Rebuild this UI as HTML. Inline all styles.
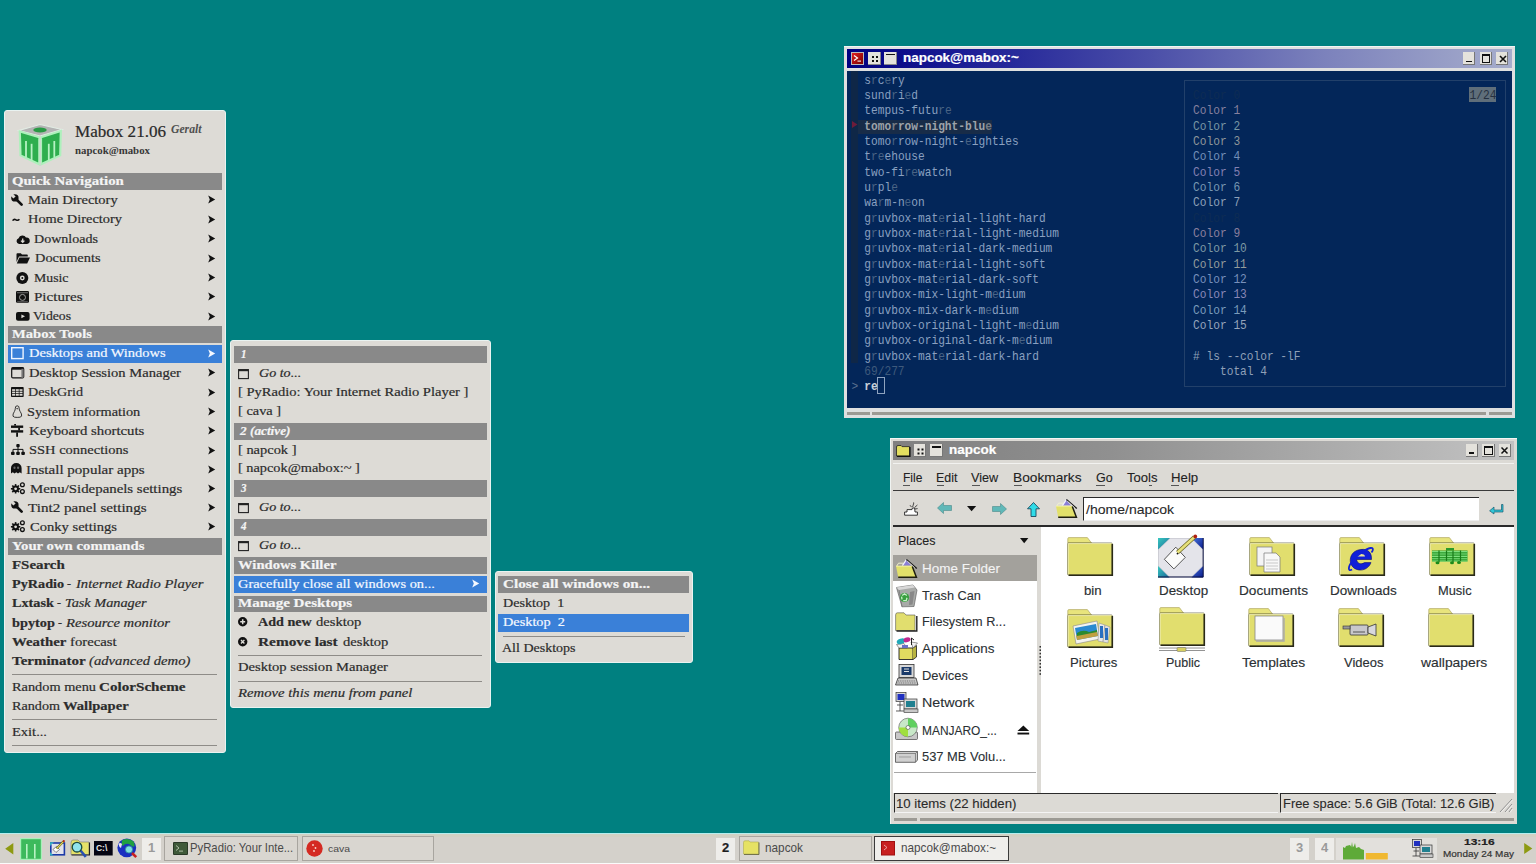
<!DOCTYPE html><html><head><meta charset="utf-8"><style>
html,body{margin:0;padding:0}
body{width:1536px;height:864px;overflow:hidden;position:relative;background:#008080;font-family:"Liberation Serif",serif}
.t{position:absolute;white-space:pre;transform-origin:0 0;-webkit-text-stroke:0.2px currentColor}
.r{position:absolute;box-sizing:border-box}
svg.r{overflow:visible}
.tm{position:absolute;white-space:pre;font-family:"Liberation Mono",monospace;font-size:11.200px;line-height:11.200px}
</style></head><body>
<div class="r" style="left:4px;top:110px;width:222px;height:643px;background:#dddbd6;border:1px solid #e9f3f1;border-radius:3px"></div>
<svg class="r" style="left:14px;top:120px" width="54" height="52" viewBox="14 120 54 52">
<polygon points="40,124.5 62,129.5 40,136 18.8,130.5" fill="#b4b4b4" stroke="#e2ece4" stroke-width="1.2"/>
<ellipse cx="40" cy="130" rx="6.7" ry="2.6" fill="#2a9a45"/>
<polygon points="19.8,131.5 39.3,137.2 39.3,164.2 20.5,155.4" fill="#2eae4e" stroke="#aef0bc" stroke-width="2.2"/>
<polygon points="60.8,131 41,137.2 41,164.2 60.2,155.4" fill="#2eae4e" stroke="#aef0bc" stroke-width="2.2"/>
<path d="M40.2 136 V166" stroke="#c8dccc" stroke-width="1.6"/>
<line x1="26" y1="141" x2="26" y2="157.5" stroke="#b5f2c2" stroke-width="1.8"/>
<line x1="31.6" y1="143.8" x2="31.6" y2="160.5" stroke="#b5f2c2" stroke-width="1.8"/>
<line x1="48.8" y1="143.8" x2="48.8" y2="160.5" stroke="#b5f2c2" stroke-width="1.8"/>
<line x1="54.3" y1="141" x2="54.3" y2="157.5" stroke="#b5f2c2" stroke-width="1.8"/>
</svg>
<div class="t" style="left:75.00px;top:124.35px;font-size:15.85px;line-height:15.85px;color:#2a2a2a;transform:scaleX(1.0768);">Mabox 21.06</div>
<div class="t" style="left:170.80px;top:122.84px;font-size:12.00px;line-height:12.00px;font-weight:700;font-style:italic;color:#505050;transform:scaleX(0.9735);-webkit-text-stroke:0;">Geralt</div>
<div class="t" style="left:75.00px;top:145.25px;font-size:11.38px;line-height:11.38px;font-weight:700;color:#383838;transform:scaleX(0.9504);-webkit-text-stroke:0;">napcok@mabox</div>
<div class="r" style="left:8px;top:173px;width:214px;height:17px;background:#898989;"></div>
<div class="t" style="left:12.00px;top:175.37px;font-size:12.92px;line-height:12.92px;font-weight:700;color:#f4f4f4;transform:scaleX(1.1511);">Quick Navigation</div>
<div class="r" style="left:8px;top:326px;width:214px;height:17px;background:#898989;"></div>
<div class="t" style="left:12.00px;top:328.37px;font-size:12.92px;line-height:12.92px;font-weight:700;color:#f4f4f4;transform:scaleX(1.1309);">Mabox Tools</div>
<div class="r" style="left:8px;top:538px;width:214px;height:17px;background:#898989;"></div>
<div class="t" style="left:12.00px;top:540.37px;font-size:12.92px;line-height:12.92px;font-weight:700;color:#f4f4f4;transform:scaleX(1.1431);">Your own commands</div>
<div class="t" style="left:27.80px;top:193.70px;font-size:12.77px;line-height:12.77px;color:#2c2c2c;transform:scaleX(1.1344);">Main Directory</div>
<svg class="r" style="left:207.8px;top:195.0px" width="8" height="9" viewBox="0 0 8 9"><path d="M0.2 0.4 L7.2 4.5 L0.2 8.6 L1.8 4.5 Z" fill="#111"/></svg>
<div class="t" style="left:27.80px;top:213.30px;font-size:12.77px;line-height:12.77px;color:#2c2c2c;transform:scaleX(1.1281);">Home Directory</div>
<svg class="r" style="left:207.8px;top:214.6px" width="8" height="9" viewBox="0 0 8 9"><path d="M0.2 0.4 L7.2 4.5 L0.2 8.6 L1.8 4.5 Z" fill="#111"/></svg>
<div class="t" style="left:33.90px;top:232.70px;font-size:12.77px;line-height:12.77px;color:#2c2c2c;transform:scaleX(1.1003);">Downloads</div>
<svg class="r" style="left:207.8px;top:234.0px" width="8" height="9" viewBox="0 0 8 9"><path d="M0.2 0.4 L7.2 4.5 L0.2 8.6 L1.8 4.5 Z" fill="#111"/></svg>
<div class="t" style="left:35.00px;top:252.20px;font-size:12.77px;line-height:12.77px;color:#2c2c2c;transform:scaleX(1.1262);">Documents</div>
<svg class="r" style="left:207.8px;top:253.5px" width="8" height="9" viewBox="0 0 8 9"><path d="M0.2 0.4 L7.2 4.5 L0.2 8.6 L1.8 4.5 Z" fill="#111"/></svg>
<div class="t" style="left:33.90px;top:271.60px;font-size:12.77px;line-height:12.77px;color:#2c2c2c;transform:scaleX(1.0808);">Music</div>
<svg class="r" style="left:207.8px;top:272.9px" width="8" height="9" viewBox="0 0 8 9"><path d="M0.2 0.4 L7.2 4.5 L0.2 8.6 L1.8 4.5 Z" fill="#111"/></svg>
<div class="t" style="left:33.90px;top:291.00px;font-size:12.77px;line-height:12.77px;color:#2c2c2c;transform:scaleX(1.1790);">Pictures</div>
<svg class="r" style="left:207.8px;top:292.3px" width="8" height="9" viewBox="0 0 8 9"><path d="M0.2 0.4 L7.2 4.5 L0.2 8.6 L1.8 4.5 Z" fill="#111"/></svg>
<div class="t" style="left:33.30px;top:310.40px;font-size:12.77px;line-height:12.77px;color:#2c2c2c;transform:scaleX(1.0732);">Videos</div>
<svg class="r" style="left:207.8px;top:311.7px" width="8" height="9" viewBox="0 0 8 9"><path d="M0.2 0.4 L7.2 4.5 L0.2 8.6 L1.8 4.5 Z" fill="#111"/></svg>
<div class="r" style="left:8px;top:345px;width:214px;height:18px;background:#3a80d8;"></div>
<div class="t" style="left:28.60px;top:347.40px;font-size:12.77px;line-height:12.77px;color:#f4f8ff;transform:scaleX(1.1339);">Desktops and Windows</div>
<svg class="r" style="left:207.8px;top:348.7px" width="8" height="9" viewBox="0 0 8 9"><path d="M0.2 0.4 L7.2 4.5 L0.2 8.6 L1.8 4.5 Z" fill="#f4f8ff"/></svg>
<div class="t" style="left:29.00px;top:366.90px;font-size:12.77px;line-height:12.77px;color:#2c2c2c;transform:scaleX(1.1399);">Desktop Session Manager</div>
<svg class="r" style="left:207.8px;top:368.2px" width="8" height="9" viewBox="0 0 8 9"><path d="M0.2 0.4 L7.2 4.5 L0.2 8.6 L1.8 4.5 Z" fill="#111"/></svg>
<div class="t" style="left:27.80px;top:386.20px;font-size:12.77px;line-height:12.77px;color:#2c2c2c;transform:scaleX(1.1078);">DeskGrid</div>
<svg class="r" style="left:207.8px;top:387.5px" width="8" height="9" viewBox="0 0 8 9"><path d="M0.2 0.4 L7.2 4.5 L0.2 8.6 L1.8 4.5 Z" fill="#111"/></svg>
<div class="t" style="left:27.00px;top:405.60px;font-size:12.77px;line-height:12.77px;color:#2c2c2c;transform:scaleX(1.1209);">System information</div>
<svg class="r" style="left:207.8px;top:406.9px" width="8" height="9" viewBox="0 0 8 9"><path d="M0.2 0.4 L7.2 4.5 L0.2 8.6 L1.8 4.5 Z" fill="#111"/></svg>
<div class="t" style="left:29.00px;top:424.90px;font-size:12.77px;line-height:12.77px;color:#2c2c2c;transform:scaleX(1.1581);">Keyboard shortcuts</div>
<svg class="r" style="left:207.8px;top:426.2px" width="8" height="9" viewBox="0 0 8 9"><path d="M0.2 0.4 L7.2 4.5 L0.2 8.6 L1.8 4.5 Z" fill="#111"/></svg>
<div class="t" style="left:29.00px;top:444.20px;font-size:12.77px;line-height:12.77px;color:#2c2c2c;transform:scaleX(1.1335);">SSH connections</div>
<svg class="r" style="left:207.8px;top:445.5px" width="8" height="9" viewBox="0 0 8 9"><path d="M0.2 0.4 L7.2 4.5 L0.2 8.6 L1.8 4.5 Z" fill="#111"/></svg>
<div class="t" style="left:25.80px;top:463.60px;font-size:12.77px;line-height:12.77px;color:#2c2c2c;transform:scaleX(1.1776);">Install popular apps</div>
<svg class="r" style="left:207.8px;top:464.9px" width="8" height="9" viewBox="0 0 8 9"><path d="M0.2 0.4 L7.2 4.5 L0.2 8.6 L1.8 4.5 Z" fill="#111"/></svg>
<div class="t" style="left:29.70px;top:482.90px;font-size:12.77px;line-height:12.77px;color:#2c2c2c;transform:scaleX(1.1638);">Menu/Sidepanels settings</div>
<svg class="r" style="left:207.8px;top:484.2px" width="8" height="9" viewBox="0 0 8 9"><path d="M0.2 0.4 L7.2 4.5 L0.2 8.6 L1.8 4.5 Z" fill="#111"/></svg>
<div class="t" style="left:27.80px;top:501.70px;font-size:12.77px;line-height:12.77px;color:#2c2c2c;transform:scaleX(1.1828);">Tint2 panel settings</div>
<svg class="r" style="left:207.8px;top:502.99999999999994px" width="8" height="9" viewBox="0 0 8 9"><path d="M0.2 0.4 L7.2 4.5 L0.2 8.6 L1.8 4.5 Z" fill="#111"/></svg>
<div class="t" style="left:29.70px;top:520.60px;font-size:12.77px;line-height:12.77px;color:#2c2c2c;transform:scaleX(1.1408);">Conky settings</div>
<svg class="r" style="left:207.8px;top:521.9000000000001px" width="8" height="9" viewBox="0 0 8 9"><path d="M0.2 0.4 L7.2 4.5 L0.2 8.6 L1.8 4.5 Z" fill="#111"/></svg>
<div class="t" style="left:11.70px;top:558.60px;font-size:12.77px;line-height:12.77px;font-weight:700;color:#2c2c2c;transform:scaleX(1.1670);">FSearch</div>
<div class="t" style="left:11.70px;top:578.00px;font-size:12.77px;line-height:12.77px;font-weight:700;color:#2c2c2c;transform:scaleX(1.1148);">PyRadio</div>
<div class="t" style="left:67.00px;top:578.00px;font-size:12.77px;line-height:12.77px;color:#2c2c2c;transform:scaleX(0.9406);">-</div>
<div class="t" style="left:75.60px;top:578.00px;font-size:12.77px;line-height:12.77px;font-style:italic;color:#2c2c2c;transform:scaleX(1.1442);">Internet Radio Player</div>
<div class="t" style="left:11.70px;top:597.40px;font-size:12.77px;line-height:12.77px;font-weight:700;color:#2c2c2c;transform:scaleX(1.1141);">Lxtask</div>
<div class="t" style="left:57.00px;top:597.40px;font-size:12.77px;line-height:12.77px;color:#2c2c2c;transform:scaleX(0.9406);">-</div>
<div class="t" style="left:65.30px;top:597.40px;font-size:12.77px;line-height:12.77px;font-style:italic;color:#2c2c2c;transform:scaleX(1.1199);">Task Manager</div>
<div class="t" style="left:11.70px;top:616.70px;font-size:12.77px;line-height:12.77px;font-weight:700;color:#2c2c2c;transform:scaleX(1.1219);">bpytop</div>
<div class="t" style="left:58.00px;top:616.70px;font-size:12.77px;line-height:12.77px;color:#2c2c2c;transform:scaleX(0.9406);">-</div>
<div class="t" style="left:66.00px;top:616.70px;font-size:12.77px;line-height:12.77px;font-style:italic;color:#2c2c2c;transform:scaleX(1.1470);">Resource monitor</div>
<div class="t" style="left:11.70px;top:635.80px;font-size:12.77px;line-height:12.77px;font-weight:700;color:#2c2c2c;transform:scaleX(1.1601);">Weather</div>
<div class="t" style="left:70.00px;top:635.80px;font-size:12.77px;line-height:12.77px;color:#2c2c2c;transform:scaleX(1.1557);">forecast</div>
<div class="t" style="left:11.70px;top:655.00px;font-size:12.77px;line-height:12.77px;font-weight:700;color:#2c2c2c;transform:scaleX(1.1747);">Terminator</div>
<div class="t" style="left:89.40px;top:655.00px;font-size:12.77px;line-height:12.77px;font-style:italic;color:#2c2c2c;transform:scaleX(1.1486);">(advanced demo)</div>
<div class="r" style="left:12px;top:674px;width:205px;height:1px;background:#8e8c88;"></div>
<div class="t" style="left:11.70px;top:680.60px;font-size:12.77px;line-height:12.77px;color:#2c2c2c;transform:scaleX(1.1225);">Random menu</div>
<div class="t" style="left:99.40px;top:680.60px;font-size:12.77px;line-height:12.77px;font-weight:700;color:#2c2c2c;transform:scaleX(1.1855);">ColorScheme</div>
<div class="t" style="left:11.70px;top:700.00px;font-size:12.77px;line-height:12.77px;color:#2c2c2c;transform:scaleX(1.1093);">Random</div>
<div class="t" style="left:63.30px;top:700.00px;font-size:12.77px;line-height:12.77px;font-weight:700;color:#2c2c2c;transform:scaleX(1.1433);">Wallpaper</div>
<div class="r" style="left:12px;top:719px;width:205px;height:1px;background:#8e8c88;"></div>
<div class="t" style="left:11.70px;top:725.80px;font-size:12.77px;line-height:12.77px;color:#2c2c2c;transform:scaleX(1.1343);">Exit...</div>
<div class="r" style="left:12px;top:745px;width:205px;height:1px;background:#8e8c88;"></div>
<svg class="r" style="left:11.3px;top:194.2px" width="12.5" height="12" viewBox="0 0 12.5 12"><circle cx="3.9" cy="3.9" r="3.7" fill="#111"/>
<path d="M4.2 4.2 L10.6 10.6" stroke="#111" stroke-width="2.7" stroke-linecap="round"/>
<path d="M-0.6 1.6 L1.6 -0.6 L4.6 2.4 L2.4 4.6 Z" fill="#dddbd6"/></svg>
<svg class="r" style="left:11.7px;top:217.8px" width="8" height="4" viewBox="0 0 8 4"><path d="M0.6 2.6 Q2 0.6 4 1.8 Q6 3 7.4 1.2" fill="none" stroke="#111" stroke-width="1.5"/></svg>
<svg class="r" style="left:16.4px;top:234.6px" width="13.5" height="9.5" viewBox="0 0 13.5 9.5"><path d="M3 9 A3 3 0 0 1 2.6 3.2 A4 4 0 0 1 10 2.6 A3.2 3.2 0 0 1 11 9 Z" fill="#111"/>
<path d="M6.7 3.4 V7.2 M5 5.6 L6.7 7.4 L8.4 5.6" stroke="#dddbd6" stroke-width="1.3" fill="none"/></svg>
<svg class="r" style="left:16px;top:252.8px" width="14" height="11" viewBox="0 0 14 11"><path d="M0.5 1.2 Q0.5 0.3 1.4 0.3 H4.8 L6 1.6 H11 Q11.8 1.6 11.8 2.4 V3.6 H3 L0.5 9 Z" fill="#111"/>
<path d="M3.4 4.6 H14 L11.2 10.6 H0.8 Z" fill="#111"/></svg>
<svg class="r" style="left:16.4px;top:271.6px" width="12.6" height="12" viewBox="0 0 12.6 12"><circle cx="6.3" cy="6" r="6" fill="#111"/><circle cx="6.3" cy="6" r="2.4" fill="#dddbd6"/><circle cx="6.3" cy="6" r="1" fill="#111"/></svg>
<svg class="r" style="left:16.4px;top:291px" width="13" height="11.7" viewBox="0 0 13 11.7"><rect x="0" y="0" width="13" height="11.7" rx="1.2" fill="#111"/>
<rect x="1" y="1.4" width="11" height="0.8" fill="#888"/>
<circle cx="6.5" cy="6.4" r="3" fill="none" stroke="#aaa" stroke-width="0.9"/>
<rect x="1.2" y="10" width="10.6" height="0.6" fill="#777"/></svg>
<svg class="r" style="left:16.4px;top:312px" width="13.6" height="8.7" viewBox="0 0 13.6 8.7"><rect x="0" y="0" width="13.6" height="8.7" rx="2" fill="#111"/><path d="M5.4 2.5 L9 4.35 L5.4 6.2 Z" fill="#dddbd6"/></svg>
<svg class="r" style="left:11.3px;top:347.3px" width="12.8" height="12.3" viewBox="0 0 12.8 12.3"><rect x="0.7" y="0.7" width="11.4" height="10.9" fill="none" stroke="#eef4ff" stroke-width="1.4"/></svg>
<svg class="r" style="left:11.3px;top:366.8px" width="13.4" height="11.6" viewBox="0 0 13.4 11.6"><rect x="0.7" y="0.7" width="12.0" height="10.2" rx="1.2" fill="none" stroke="#111" stroke-width="1.2"/>
<rect x="0.7" y="0.7" width="12.0" height="2" fill="#111"/>
<rect x="10.4" y="1.8" width="2.2" height="9.0" fill="#777"/></svg>
<svg class="r" style="left:11.3px;top:386.8px" width="12.7" height="10" viewBox="0 0 12.7 10"><rect x="0" y="0" width="12.7" height="10" rx="0.8" fill="#111"/><rect x="1.1" y="2.2" width="3.0" height="1.7" fill="#dddbd6"/><rect x="4.8" y="2.2" width="3.0" height="1.7" fill="#dddbd6"/><rect x="8.5" y="2.2" width="3.0" height="1.7" fill="#dddbd6"/><rect x="1.1" y="4.6" width="3.0" height="1.7" fill="#dddbd6"/><rect x="4.8" y="4.6" width="3.0" height="1.7" fill="#dddbd6"/><rect x="8.5" y="4.6" width="3.0" height="1.7" fill="#dddbd6"/><rect x="1.1" y="7.0" width="3.0" height="1.7" fill="#dddbd6"/><rect x="4.8" y="7.0" width="3.0" height="1.7" fill="#dddbd6"/><rect x="8.5" y="7.0" width="3.0" height="1.7" fill="#dddbd6"/></svg>
<svg class="r" style="left:11.9px;top:404.6px" width="10.6" height="13" viewBox="0 0 10.6 13"><path d="M5.2 0.8 Q3.2 0.8 3.3 3.4 Q3.3 5 2.4 6.5 Q0.6 9 1 11.2 Q2 12.6 5.2 12.4 Q8.6 12.6 9.6 11.2 Q10 9 8.2 6.5 Q7.2 5 7.2 3.4 Q7.2 0.8 5.2 0.8 Z" fill="none" stroke="#222" stroke-width="0.9"/>
<path d="M4 3.2 L6.4 3.2 L5.2 4.6 Z" fill="#222"/></svg>
<svg class="r" style="left:11.3px;top:424px" width="12.2" height="12.8" viewBox="0 0 12.2 12.8"><rect x="0" y="1.5" width="12.2" height="2.4" fill="#111"/><rect x="0" y="6.2" width="12.2" height="2.4" fill="#111"/><rect x="3.2" y="0" width="1.8" height="1.6" fill="#111"/><rect x="7.2" y="3.8" width="1.8" height="2.6" fill="#111"/><rect x="5.2" y="8.4" width="1.8" height="4.4" fill="#111"/></svg>
<svg class="r" style="left:11.3px;top:443.9px" width="14" height="11.2" viewBox="0 0 14 11.2"><rect x="5.3" y="0" width="3.4" height="3.2" rx="1" fill="#111"/>
<path d="M7 3 V5.4 M2 8 V5.4 H12 V8 M7 5.4 V8" stroke="#111" stroke-width="1" fill="none"/>
<rect x="0" y="7.8" width="3.6" height="3.3" rx="1" fill="#111"/><rect x="5.2" y="7.8" width="3.6" height="3.3" rx="1" fill="#111"/><rect x="10.3" y="7.8" width="3.6" height="3.3" rx="1" fill="#111"/></svg>
<svg class="r" style="left:11.3px;top:462.8px" width="10.6" height="10.5" viewBox="0 0 10.6 10.5"><path d="M0 10.5 V5 A5.3 5 0 0 1 10.6 5 V10.5 L8.8 9.2 L7 10.5 L5.3 9.2 L3.6 10.5 L1.8 9.2 Z" fill="#111"/>
<ellipse cx="3.5" cy="4.8" rx="1.1" ry="1.3" fill="#666"/><ellipse cx="7.1" cy="4.8" rx="1.1" ry="1.3" fill="#666"/></svg>
<svg class="r" style="left:11.3px;top:482px" width="14" height="12.4" viewBox="0 0 14 12.4"><circle cx="4.6" cy="6.8" r="3.4" fill="#111"/><rect x="3.8" y="2.0999999999999996" width="1.6" height="2.3" fill="#111" transform="rotate(0.0 4.6 6.8)"/><rect x="3.8" y="2.0999999999999996" width="1.6" height="2.3" fill="#111" transform="rotate(45.0 4.6 6.8)"/><rect x="3.8" y="2.0999999999999996" width="1.6" height="2.3" fill="#111" transform="rotate(90.0 4.6 6.8)"/><rect x="3.8" y="2.0999999999999996" width="1.6" height="2.3" fill="#111" transform="rotate(135.0 4.6 6.8)"/><rect x="3.8" y="2.0999999999999996" width="1.6" height="2.3" fill="#111" transform="rotate(180.0 4.6 6.8)"/><rect x="3.8" y="2.0999999999999996" width="1.6" height="2.3" fill="#111" transform="rotate(225.0 4.6 6.8)"/><rect x="3.8" y="2.0999999999999996" width="1.6" height="2.3" fill="#111" transform="rotate(270.0 4.6 6.8)"/><rect x="3.8" y="2.0999999999999996" width="1.6" height="2.3" fill="#111" transform="rotate(315.0 4.6 6.8)"/><circle cx="4.6" cy="6.8" r="1.4" fill="#dddbd6"/><circle cx="11.4" cy="2.7" r="1.9" fill="none" stroke="#111" stroke-width="1.3"/><circle cx="11.4" cy="9.6" r="1.9" fill="none" stroke="#111" stroke-width="1.3"/></svg>
<svg class="r" style="left:11.3px;top:501px" width="12.5" height="12" viewBox="0 0 12.5 12"><circle cx="3.9" cy="3.9" r="3.7" fill="#111"/>
<path d="M4.2 4.2 L10.6 10.6" stroke="#111" stroke-width="2.7" stroke-linecap="round"/>
<path d="M-0.6 1.6 L1.6 -0.6 L4.6 2.4 L2.4 4.6 Z" fill="#dddbd6"/></svg>
<svg class="r" style="left:11.3px;top:520.2px" width="14" height="12.4" viewBox="0 0 14 12.4"><circle cx="4.6" cy="6.8" r="3.4" fill="#111"/><rect x="3.8" y="2.0999999999999996" width="1.6" height="2.3" fill="#111" transform="rotate(0.0 4.6 6.8)"/><rect x="3.8" y="2.0999999999999996" width="1.6" height="2.3" fill="#111" transform="rotate(45.0 4.6 6.8)"/><rect x="3.8" y="2.0999999999999996" width="1.6" height="2.3" fill="#111" transform="rotate(90.0 4.6 6.8)"/><rect x="3.8" y="2.0999999999999996" width="1.6" height="2.3" fill="#111" transform="rotate(135.0 4.6 6.8)"/><rect x="3.8" y="2.0999999999999996" width="1.6" height="2.3" fill="#111" transform="rotate(180.0 4.6 6.8)"/><rect x="3.8" y="2.0999999999999996" width="1.6" height="2.3" fill="#111" transform="rotate(225.0 4.6 6.8)"/><rect x="3.8" y="2.0999999999999996" width="1.6" height="2.3" fill="#111" transform="rotate(270.0 4.6 6.8)"/><rect x="3.8" y="2.0999999999999996" width="1.6" height="2.3" fill="#111" transform="rotate(315.0 4.6 6.8)"/><circle cx="4.6" cy="6.8" r="1.4" fill="#dddbd6"/><circle cx="11.4" cy="2.7" r="1.9" fill="none" stroke="#111" stroke-width="1.3"/><circle cx="11.4" cy="9.6" r="1.9" fill="none" stroke="#111" stroke-width="1.3"/></svg>
<div class="r" style="left:230px;top:340px;width:261px;height:368px;background:#dddbd6;border:1px solid #e9f3f1;border-radius:3px"></div>
<div class="r" style="left:233.5px;top:346px;width:253.5px;height:17px;background:#898989;"></div>
<div class="t" style="left:240.60px;top:347.87px;font-size:12.92px;line-height:12.92px;font-weight:700;font-style:italic;color:#f4f4f4;transform:scaleX(0.8512);">1</div>
<svg class="r" style="left:237.5px;top:368.7px" width="11" height="10.2" viewBox="0 0 11 10.2"><rect x="0.6" y="0.6" width="9.8" height="9.0" fill="none" stroke="#222" stroke-width="1.1"/>
<rect x="0.6" y="0.6" width="9.8" height="1.6" fill="#222"/></svg>
<div class="t" style="left:259.40px;top:367.20px;font-size:12.77px;line-height:12.77px;font-style:italic;color:#2c2c2c;transform:scaleX(1.1016);">Go to...</div>
<div class="t" style="left:237.50px;top:386.30px;font-size:12.77px;line-height:12.77px;color:#2c2c2c;transform:scaleX(1.1382);">[ PyRadio: Your Internet Radio Player ]</div>
<div class="t" style="left:237.50px;top:405.00px;font-size:12.77px;line-height:12.77px;color:#2c2c2c;transform:scaleX(1.1260);">[ cava ]</div>
<div class="r" style="left:233.5px;top:423px;width:253.5px;height:17px;background:#898989;"></div>
<div class="t" style="left:240.00px;top:424.67px;font-size:12.92px;line-height:12.92px;font-weight:700;font-style:italic;color:#f4f4f4;transform:scaleX(1.0295);">2 (active)</div>
<div class="t" style="left:237.50px;top:443.80px;font-size:12.77px;line-height:12.77px;color:#2c2c2c;transform:scaleX(1.1301);">[ napcok ]</div>
<div class="t" style="left:237.50px;top:462.40px;font-size:12.77px;line-height:12.77px;color:#2c2c2c;transform:scaleX(1.1211);">[ napcok@mabox:~ ]</div>
<div class="r" style="left:233.5px;top:480.3px;width:253.5px;height:16.69999999999999px;background:#898989;"></div>
<div class="t" style="left:240.60px;top:482.07px;font-size:12.92px;line-height:12.92px;font-weight:700;font-style:italic;color:#f4f4f4;transform:scaleX(0.8512);">3</div>
<svg class="r" style="left:237.5px;top:502.5px" width="11" height="10.2" viewBox="0 0 11 10.2"><rect x="0.6" y="0.6" width="9.8" height="9.0" fill="none" stroke="#222" stroke-width="1.1"/>
<rect x="0.6" y="0.6" width="9.8" height="1.6" fill="#222"/></svg>
<div class="t" style="left:259.40px;top:501.00px;font-size:12.77px;line-height:12.77px;font-style:italic;color:#2c2c2c;transform:scaleX(1.1016);">Go to...</div>
<div class="r" style="left:233.5px;top:518.8px;width:253.5px;height:16.800000000000068px;background:#898989;"></div>
<div class="t" style="left:240.60px;top:520.47px;font-size:12.92px;line-height:12.92px;font-weight:700;font-style:italic;color:#f4f4f4;transform:scaleX(0.8512);">4</div>
<svg class="r" style="left:237.5px;top:541px" width="11" height="10.2" viewBox="0 0 11 10.2"><rect x="0.6" y="0.6" width="9.8" height="9.0" fill="none" stroke="#222" stroke-width="1.1"/>
<rect x="0.6" y="0.6" width="9.8" height="1.6" fill="#222"/></svg>
<div class="t" style="left:259.40px;top:539.40px;font-size:12.77px;line-height:12.77px;font-style:italic;color:#2c2c2c;transform:scaleX(1.1016);">Go to...</div>
<div class="r" style="left:233.5px;top:557px;width:253.5px;height:17px;background:#898989;"></div>
<div class="t" style="left:237.50px;top:558.67px;font-size:12.92px;line-height:12.92px;font-weight:700;color:#f4f4f4;transform:scaleX(1.1322);">Windows Killer</div>
<div class="r" style="left:233.5px;top:576.3px;width:253.5px;height:16.700000000000045px;background:#3a80d8;"></div>
<div class="t" style="left:237.50px;top:578.40px;font-size:12.77px;line-height:12.77px;color:#f4f8ff;transform:scaleX(1.1263);">Gracefully close all windows on...</div>
<svg class="r" style="left:472px;top:579.1px" width="8" height="9" viewBox="0 0 8 9"><path d="M0.2 0.4 L7.2 4.5 L0.2 8.6 L1.8 4.5 Z" fill="#f4f8ff"/></svg>
<div class="r" style="left:233.5px;top:595.5px;width:253.5px;height:16.700000000000045px;background:#898989;"></div>
<div class="t" style="left:237.60px;top:597.07px;font-size:12.92px;line-height:12.92px;font-weight:700;color:#f4f4f4;transform:scaleX(1.1663);">Manage Desktops</div>
<svg class="r" style="left:237.6px;top:617.2px" width="9.4" height="9.4" viewBox="0 0 9.4 9.4"><circle cx="4.7" cy="4.7" r="4.7" fill="#111"/><path d="M4.7 2.2 V7.2 M2.2 4.7 H7.2" stroke="#dddbd6" stroke-width="1.5"/></svg>
<div class="t" style="left:258.30px;top:616.10px;font-size:12.77px;line-height:12.77px;font-weight:700;color:#2c2c2c;transform:scaleX(1.1047);">Add new</div>
<div class="t" style="left:315.70px;top:616.10px;font-size:12.77px;line-height:12.77px;color:#2c2c2c;transform:scaleX(1.1404);">desktop</div>
<svg class="r" style="left:237.6px;top:636.6px" width="9.4" height="9.4" viewBox="0 0 9.4 9.4"><circle cx="4.7" cy="4.7" r="4.7" fill="#111"/><path d="M3 3 L6.4 6.4 M6.4 3 L3 6.4" stroke="#dddbd6" stroke-width="1.4"/></svg>
<div class="t" style="left:258.30px;top:635.50px;font-size:12.77px;line-height:12.77px;font-weight:700;color:#2c2c2c;transform:scaleX(1.2019);">Remove last</div>
<div class="t" style="left:342.60px;top:635.50px;font-size:12.77px;line-height:12.77px;color:#2c2c2c;transform:scaleX(1.1404);">desktop</div>
<div class="r" style="left:237.6px;top:655px;width:244.79999999999998px;height:1px;background:#8e8c88;"></div>
<div class="t" style="left:237.60px;top:661.40px;font-size:12.77px;line-height:12.77px;color:#2c2c2c;transform:scaleX(1.1432);">Desktop session Manager</div>
<div class="r" style="left:237.6px;top:681px;width:244.79999999999998px;height:1px;background:#8e8c88;"></div>
<div class="t" style="left:237.60px;top:687.40px;font-size:12.77px;line-height:12.77px;font-style:italic;color:#2c2c2c;transform:scaleX(1.1527);">Remove this menu from panel</div>
<div class="r" style="left:495px;top:571px;width:198px;height:92px;background:#dddbd6;border:1px solid #e9f3f1;border-radius:3px"></div>
<div class="r" style="left:498.2px;top:576px;width:191.00000000000006px;height:17px;background:#898989;"></div>
<div class="t" style="left:502.50px;top:577.97px;font-size:12.92px;line-height:12.92px;font-weight:700;color:#f4f4f4;transform:scaleX(1.1789);">Close all windows on...</div>
<div class="t" style="left:502.50px;top:597.40px;font-size:12.77px;line-height:12.77px;color:#2c2c2c;transform:scaleX(1.1079);">Desktop  1</div>
<div class="r" style="left:498.2px;top:614.4px;width:191.00000000000006px;height:17.200000000000045px;background:#3a80d8;"></div>
<div class="t" style="left:502.50px;top:616.00px;font-size:12.77px;line-height:12.77px;color:#f4f8ff;transform:scaleX(1.1206);">Desktop  2</div>
<div class="r" style="left:503px;top:635.5px;width:182px;height:1.0px;background:#8e8c88;"></div>
<div class="t" style="left:502.00px;top:641.80px;font-size:12.77px;line-height:12.77px;color:#2c2c2c;transform:scaleX(1.0964);">All Desktops</div>
<div class="r" style="left:844px;top:46px;width:671px;height:372px;background:#dfe0e0;"></div>
<div class="r" style="left:844px;top:46px;width:671px;height:1px;background:#f2f4f4;"></div>
<div class="r" style="left:847px;top:49px;width:665px;height:19px;background:linear-gradient(90deg,#000080 0%,#1c1e96 18%,#4a4ea8 45%,#7c82bc 72%,#a6adcc 100%);"></div>
<div class="r" style="left:847px;top:71px;width:665px;height:337px;background:#032659;"></div>
<div class="r" style="left:847px;top:412px;width:23px;height:2.5px;background:#9c9a94;"></div>
<div class="r" style="left:872px;top:412px;width:614px;height:2.5px;background:#9c9a94;"></div>
<div class="r" style="left:1489px;top:412px;width:23px;height:2.5px;background:#9c9a94;"></div>
<div class="r" style="left:850.5px;top:51.5px;width:13.5px;height:13.5px;background:linear-gradient(135deg,#e02020,#7a0000);border:1px solid #bbb"></div>
<svg class="r" style="left:853px;top:54px" width="9" height="9"><path d="M1 1.5 L4.5 4 L1 6.5" stroke="#fff" stroke-width="1.2" fill="none"/><rect x="4.5" y="6.6" width="3.5" height="1" fill="#fff"/></svg>
<div class="r" style="left:868px;top:51.5px;width:13px;height:13.5px;background:#e4e2dc;border-right:1px solid #888;border-bottom:1px solid #888"></div>
<svg class="r" style="left:871px;top:55px" width="8" height="8"><rect x="1" y="1" width="2" height="2" fill="#111"/><rect x="5" y="1" width="2" height="2" fill="#111"/><rect x="1" y="5" width="2" height="2" fill="#111"/><rect x="5" y="5" width="2" height="2" fill="#111"/></svg>
<div class="r" style="left:884px;top:51.5px;width:13px;height:13.5px;background:#e4e2dc;border-right:1px solid #888;border-bottom:1px solid #888"></div>
<div class="r" style="left:885.5px;top:53.5px;width:9.5px;height:1.5px;background:#111;"></div>
<div class="t" style="left:902.70px;top:50.74px;font-size:13.48px;line-height:13.48px;font-family:'Liberation Sans', sans-serif;font-weight:700;color:#ffffff;transform:scaleX(0.9988);">napcok@mabox:~</div>
<div class="r" style="left:1463.4px;top:52px;width:12px;height:12.6px;background:#e4e2dc;border-right:1px solid #777;border-bottom:1px solid #777"></div>
<div class="r" style="left:1479.6px;top:52px;width:12px;height:12.6px;background:#e4e2dc;border-right:1px solid #777;border-bottom:1px solid #777"></div>
<div class="r" style="left:1496px;top:52px;width:12px;height:12.6px;background:#e4e2dc;border-right:1px solid #777;border-bottom:1px solid #777"></div>
<div class="r" style="left:1466px;top:60.5px;width:6px;height:1.5px;background:#111;"></div>
<div class="r" style="left:1481.6px;top:54px;width:8.5px;height:8.5px;border:1.2px solid #111;border-top-width:2px"></div>
<svg class="r" style="left:1497.5px;top:53.5px" width="10" height="10"><path d="M2 2 L8 8 M8 2 L2 8" stroke="#111" stroke-width="1.6"/></svg>
<div class="r" style="left:851px;top:71px;width:6.5px;height:291.5px;background:#0f2747;"></div>
<div class="r" style="left:857.5px;top:119.75999999999999px;width:134.5px;height:14.5px;background:#182c48;"></div>
<div class="tm" style="left:864.3px;top:75.79px;color:#8aa0c0;transform:scaleY(1.12);transform-origin:0 8.51px;">s<span style="color:#4a6485">r</span>c<span style="color:#4a6485">e</span>ry</div>
<div class="tm" style="left:864.3px;top:91.11px;color:#8aa0c0;transform:scaleY(1.12);transform-origin:0 8.51px;">sund<span style="color:#4a6485">r</span>i<span style="color:#4a6485">e</span>d</div>
<div class="tm" style="left:864.3px;top:106.43px;color:#8aa0c0;transform:scaleY(1.12);transform-origin:0 8.51px;">tempus-futu<span style="color:#4a6485">r</span><span style="color:#4a6485">e</span></div>
<div class="tm" style="left:864.3px;top:121.75px;color:#9ea3aa;font-weight:700;transform:scaleY(1.12);transform-origin:0 8.51px;">tomo<span style="color:#767c84">r</span>row-night-blu<span style="color:#767c84">e</span></div>
<div class="tm" style="left:864.3px;top:137.07px;color:#8aa0c0;transform:scaleY(1.12);transform-origin:0 8.51px;">tomo<span style="color:#4a6485">r</span>row-night-<span style="color:#4a6485">e</span>ighties</div>
<div class="tm" style="left:864.3px;top:152.39px;color:#8aa0c0;transform:scaleY(1.12);transform-origin:0 8.51px;">t<span style="color:#4a6485">r</span><span style="color:#4a6485">e</span>ehouse</div>
<div class="tm" style="left:864.3px;top:167.71px;color:#8aa0c0;transform:scaleY(1.12);transform-origin:0 8.51px;">two-fi<span style="color:#4a6485">r</span><span style="color:#4a6485">e</span>watch</div>
<div class="tm" style="left:864.3px;top:183.03px;color:#8aa0c0;transform:scaleY(1.12);transform-origin:0 8.51px;">u<span style="color:#4a6485">r</span>pl<span style="color:#4a6485">e</span></div>
<div class="tm" style="left:864.3px;top:198.35px;color:#8aa0c0;transform:scaleY(1.12);transform-origin:0 8.51px;">wa<span style="color:#4a6485">r</span>m-n<span style="color:#4a6485">e</span>on</div>
<div class="tm" style="left:864.3px;top:213.67px;color:#8aa0c0;transform:scaleY(1.12);transform-origin:0 8.51px;">g<span style="color:#4a6485">r</span>uvbox-mat<span style="color:#4a6485">e</span>rial-light-hard</div>
<div class="tm" style="left:864.3px;top:228.99px;color:#8aa0c0;transform:scaleY(1.12);transform-origin:0 8.51px;">g<span style="color:#4a6485">r</span>uvbox-mat<span style="color:#4a6485">e</span>rial-light-medium</div>
<div class="tm" style="left:864.3px;top:244.31px;color:#8aa0c0;transform:scaleY(1.12);transform-origin:0 8.51px;">g<span style="color:#4a6485">r</span>uvbox-mat<span style="color:#4a6485">e</span>rial-dark-medium</div>
<div class="tm" style="left:864.3px;top:259.63px;color:#8aa0c0;transform:scaleY(1.12);transform-origin:0 8.51px;">g<span style="color:#4a6485">r</span>uvbox-mat<span style="color:#4a6485">e</span>rial-light-soft</div>
<div class="tm" style="left:864.3px;top:274.95px;color:#8aa0c0;transform:scaleY(1.12);transform-origin:0 8.51px;">g<span style="color:#4a6485">r</span>uvbox-mat<span style="color:#4a6485">e</span>rial-dark-soft</div>
<div class="tm" style="left:864.3px;top:290.27px;color:#8aa0c0;transform:scaleY(1.12);transform-origin:0 8.51px;">g<span style="color:#4a6485">r</span>uvbox-mix-light-m<span style="color:#4a6485">e</span>dium</div>
<div class="tm" style="left:864.3px;top:305.59px;color:#8aa0c0;transform:scaleY(1.12);transform-origin:0 8.51px;">g<span style="color:#4a6485">r</span>uvbox-mix-dark-m<span style="color:#4a6485">e</span>dium</div>
<div class="tm" style="left:864.3px;top:320.91px;color:#8aa0c0;transform:scaleY(1.12);transform-origin:0 8.51px;">g<span style="color:#4a6485">r</span>uvbox-original-light-m<span style="color:#4a6485">e</span>dium</div>
<div class="tm" style="left:864.3px;top:336.23px;color:#8aa0c0;transform:scaleY(1.12);transform-origin:0 8.51px;">g<span style="color:#4a6485">r</span>uvbox-original-dark-m<span style="color:#4a6485">e</span>dium</div>
<div class="tm" style="left:864.3px;top:351.55px;color:#8aa0c0;transform:scaleY(1.12);transform-origin:0 8.51px;">g<span style="color:#4a6485">r</span>uvbox-mat<span style="color:#4a6485">e</span>rial-dark-hard</div>
<svg class="r" style="left:852px;top:121px" width="6" height="7"><path d="M0 0 L5.5 3.5 L0 7 Z" fill="#6e1c3a"/></svg>
<div class="tm" style="left:864.3px;top:366.87px;color:#3f5a7c;transform:scaleY(1.12);transform-origin:0 8.51px;">69/277</div>
<div class="tm" style="left:851.5px;top:382.19px;color:#5a7090;transform:scaleY(1.12);transform-origin:0 8.51px;">&gt;</div>
<div class="tm" style="left:864.3px;top:382.19px;color:#c8d0da;font-weight:700;transform:scaleY(1.12);transform-origin:0 8.51px;">re</div>
<div class="r" style="left:876.8px;top:377.4px;width:8.5px;height:17px;border:1px solid #8fa3bf"></div>
<div class="r" style="left:1183.5px;top:79.5px;width:322.5px;height:307px;border:1px solid #22406a"></div>
<div class="r" style="left:1469px;top:86.5px;width:27px;height:15.099999999999994px;background:#5f6e7a;"></div>
<div class="tm" style="left:1469.5px;top:91.11px;color:#253040;transform:scaleY(1.12);transform-origin:0 8.51px;">1/24</div>
<div class="tm" style="left:1193.1px;top:91.11px;color:#0e2c54;transform:scaleY(1.12);transform-origin:0 8.51px;">Color 0</div>
<div class="tm" style="left:1193.1px;top:106.43px;color:#86809e;transform:scaleY(1.12);transform-origin:0 8.51px;">Color 1</div>
<div class="tm" style="left:1193.1px;top:121.75px;color:#7896a4;transform:scaleY(1.12);transform-origin:0 8.51px;">Color 2</div>
<div class="tm" style="left:1193.1px;top:137.07px;color:#90969a;transform:scaleY(1.12);transform-origin:0 8.51px;">Color 3</div>
<div class="tm" style="left:1193.1px;top:152.39px;color:#7490b8;transform:scaleY(1.12);transform-origin:0 8.51px;">Color 4</div>
<div class="tm" style="left:1193.1px;top:167.71px;color:#8480b2;transform:scaleY(1.12);transform-origin:0 8.51px;">Color 5</div>
<div class="tm" style="left:1193.1px;top:183.03px;color:#7898b2;transform:scaleY(1.12);transform-origin:0 8.51px;">Color 6</div>
<div class="tm" style="left:1193.1px;top:198.35px;color:#8ea0b8;transform:scaleY(1.12);transform-origin:0 8.51px;">Color 7</div>
<div class="tm" style="left:1193.1px;top:213.67px;color:#0e2c54;transform:scaleY(1.12);transform-origin:0 8.51px;">Color 8</div>
<div class="tm" style="left:1193.1px;top:228.99px;color:#8c809e;transform:scaleY(1.12);transform-origin:0 8.51px;">Color 9</div>
<div class="tm" style="left:1193.1px;top:244.31px;color:#7e9aa4;transform:scaleY(1.12);transform-origin:0 8.51px;">Color 10</div>
<div class="tm" style="left:1193.1px;top:259.63px;color:#949c9c;transform:scaleY(1.12);transform-origin:0 8.51px;">Color 11</div>
<div class="tm" style="left:1193.1px;top:274.95px;color:#7890bc;transform:scaleY(1.12);transform-origin:0 8.51px;">Color 12</div>
<div class="tm" style="left:1193.1px;top:290.27px;color:#8a88b8;transform:scaleY(1.12);transform-origin:0 8.51px;">Color 13</div>
<div class="tm" style="left:1193.1px;top:305.59px;color:#7a9cbc;transform:scaleY(1.12);transform-origin:0 8.51px;">Color 14</div>
<div class="tm" style="left:1193.1px;top:320.91px;color:#96a4bc;transform:scaleY(1.12);transform-origin:0 8.51px;">Color 15</div>
<div class="tm" style="left:1193.1px;top:351.55px;color:#8fa0b8;transform:scaleY(1.12);transform-origin:0 8.51px;"># ls --color -lF</div>
<div class="tm" style="left:1193.1px;top:366.87px;color:#8fa0b8;transform:scaleY(1.12);transform-origin:0 8.51px;">    total 4</div>
<div class="r" style="left:890px;top:437.5px;width:627px;height:386.29999999999995px;background:#dcdad5;"></div>
<div class="r" style="left:890px;top:437.5px;width:627px;height:1.0px;background:#f4f6f4;"></div>
<div class="r" style="left:890px;top:437.5px;width:1px;height:386.29999999999995px;background:#f0f4f2;"></div>
<div class="r" style="left:893px;top:441px;width:621px;height:19px;background:linear-gradient(90deg,#808080 0%,#909090 35%,#c2c2c2 100%);"></div>
<svg class="r" style="left:896px;top:445px" width="15" height="11.5" viewBox="0 0 15 11.5"><path d="M0.5 2 Q0.5 0.5 2 0.5 H5 L6 1.6 H13.5 V11 H0.5 Z" fill="#e2de60" stroke="#222" stroke-width="0.8"/><path d="M14 2 V11.3 H1" stroke="#111" stroke-width="1.2" fill="none"/></svg>
<div class="r" style="left:914.2px;top:444px;width:12.2px;height:12.8px;background:#e4e2dc;border-right:1px solid #777;border-bottom:1px solid #777"></div>
<svg class="r" style="left:917px;top:447.5px" width="7" height="7" viewBox="0 0 7 7"><rect x="0.5" y="0.5" width="2" height="2" fill="#111"/><rect x="4.5" y="0.5" width="2" height="2" fill="#111"/><rect x="0.5" y="4.5" width="2" height="2" fill="#111"/><rect x="4.5" y="4.5" width="2" height="2" fill="#111"/></svg>
<div class="r" style="left:930px;top:444px;width:13.3px;height:12.8px;background:#e4e2dc;border-right:1px solid #777;border-bottom:1px solid #777"></div>
<div class="r" style="left:931.5px;top:446px;width:9.5px;height:1.6000000000000227px;background:#111;"></div>
<div class="t" style="left:948.80px;top:443.11px;font-size:13.04px;line-height:13.04px;font-family:'Liberation Sans', sans-serif;font-weight:700;color:#ffffff;transform:scaleX(1.0336);">napcok</div>
<div class="r" style="left:1465.6px;top:444.3px;width:12.5px;height:12.3px;background:#e4e2dc;border-right:1px solid #777;border-bottom:1px solid #777"></div>
<div class="r" style="left:1482px;top:444.3px;width:12.5px;height:12.3px;background:#e4e2dc;border-right:1px solid #777;border-bottom:1px solid #777"></div>
<div class="r" style="left:1498.6px;top:444.3px;width:12.5px;height:12.3px;background:#e4e2dc;border-right:1px solid #777;border-bottom:1px solid #777"></div>
<div class="r" style="left:1468.5px;top:452.3px;width:5.5px;height:1.6999999999999886px;background:#111;"></div>
<div class="r" style="left:1484px;top:446px;width:8.5px;height:8.5px;border:1.2px solid #111;border-top-width:2px"></div>
<svg class="r" style="left:1500.3px;top:445.8px" width="9" height="9" viewBox="0 0 9 9"><path d="M1.5 1.5 L7.5 7.5 M7.5 1.5 L1.5 7.5" stroke="#111" stroke-width="1.5"/></svg>
<div class="r" style="left:893px;top:462.5px;width:621px;height:27.0px;background:#dcdad5;"></div>
<div class="r" style="left:893px;top:462.5px;width:621px;height:1.0px;background:#f2f2f0;"></div>
<div class="r" style="left:893px;top:489.5px;width:621px;height:1.5px;background:#3a3a3a;"></div>
<div class="t" style="left:902.60px;top:470.77px;font-size:13.33px;line-height:13.33px;font-family:'Liberation Sans', sans-serif;color:#222;transform:scaleX(0.9029);-webkit-text-stroke:0.1px #222;">File</div>
<div class="t" style="left:936.20px;top:470.77px;font-size:13.33px;line-height:13.33px;font-family:'Liberation Sans', sans-serif;color:#222;transform:scaleX(0.9314);-webkit-text-stroke:0.1px #222;">Edit</div>
<div class="t" style="left:971.40px;top:470.77px;font-size:13.33px;line-height:13.33px;font-family:'Liberation Sans', sans-serif;color:#222;transform:scaleX(0.9525);-webkit-text-stroke:0.1px #222;">View</div>
<div class="t" style="left:1013.20px;top:470.77px;font-size:13.33px;line-height:13.33px;font-family:'Liberation Sans', sans-serif;color:#222;transform:scaleX(1.0287);-webkit-text-stroke:0.1px #222;">Bookmarks</div>
<div class="t" style="left:1095.50px;top:470.77px;font-size:13.33px;line-height:13.33px;font-family:'Liberation Sans', sans-serif;color:#222;transform:scaleX(0.9389);-webkit-text-stroke:0.1px #222;">Go</div>
<div class="t" style="left:1126.50px;top:470.77px;font-size:13.33px;line-height:13.33px;font-family:'Liberation Sans', sans-serif;color:#222;transform:scaleX(0.9799);-webkit-text-stroke:0.1px #222;">Tools</div>
<div class="t" style="left:1170.50px;top:470.77px;font-size:13.33px;line-height:13.33px;font-family:'Liberation Sans', sans-serif;color:#222;transform:scaleX(0.9919);-webkit-text-stroke:0.1px #222;">Help</div>
<div class="r" style="left:903px;top:484.6px;width:6.5px;height:0.8999999999999773px;background:#555;"></div>
<div class="r" style="left:936.5px;top:484.6px;width:7.0px;height:0.8999999999999773px;background:#555;"></div>
<div class="r" style="left:971.5px;top:484.6px;width:8.0px;height:0.8999999999999773px;background:#555;"></div>
<div class="r" style="left:1013.5px;top:484.6px;width:8.0px;height:0.8999999999999773px;background:#555;"></div>
<div class="r" style="left:1096px;top:484.6px;width:8.5px;height:0.8999999999999773px;background:#555;"></div>
<div class="r" style="left:1149px;top:484.6px;width:3px;height:0.8999999999999773px;background:#555;"></div>
<div class="r" style="left:1170.5px;top:484.6px;width:8.5px;height:0.8999999999999773px;background:#555;"></div>
<div class="r" style="left:893px;top:491px;width:621px;height:34px;background:#dcdad5;"></div>
<div class="r" style="left:893px;top:525px;width:621px;height:2px;background:#2a2a2a;"></div>
<svg class="r" style="left:903.7px;top:501.7px" width="14" height="14" viewBox="0 0 14 14"><path d="M0.6 13.2 V10 H3 V7.6 H8 L8.4 6 H10.6 L11 10 H13.4 V13.2 Z" fill="#fff" stroke="#222" stroke-width="0.9"/><path d="M8.6 5 L9.8 1 M10.6 5.5 L13.4 3 M7.6 5.2 L6 3.2 M11 7 L13.6 6.6 M9.6 0 V0.6" stroke="#222" stroke-width="0.8"/></svg>
<svg class="r" style="left:936.9px;top:502.4px" width="15" height="12" viewBox="0 0 15 12"><path d="M0.5 6 L6.5 0.5 V3.5 H14.5 V8.5 H6.5 V11.5 Z" fill="#60b8b8" stroke="#4a8a8a" stroke-width="0.6"/></svg>
<svg class="r" style="left:966.8px;top:505.6px" width="9.2" height="5.2" viewBox="0 0 9.2 5.2"><path d="M0 0 H9.2 L4.6 5.2 Z" fill="#111"/></svg>
<svg class="r" style="left:992.2px;top:503.2px" width="15" height="12" viewBox="0 0 15 12"><g transform="translate(15 0) scale(-1 1)"><path d="M0.5 6 L6.5 0.5 V3.5 H14.5 V8.5 H6.5 V11.5 Z" fill="#60b8b8" stroke="#4a8a8a" stroke-width="0.6"/></g></svg>
<svg class="r" style="left:1026.7px;top:501.7px" width="13" height="15" viewBox="0 0 13 15"><path d="M6.5 0.5 L12.5 6.8 H9 V14.5 H4 V6.8 H0.5 Z" fill="#30dce8" stroke="#1a4a60" stroke-width="0.9"/></svg>
<svg class="r" style="left:1054.5px;top:499.2px" width="22.5" height="19.5" viewBox="0 0 22.5 19.5"><path d="M1.5 7.5 L3.5 4.2 H8.5" fill="none" stroke="#f0f0d0" stroke-width="1"/>
<path d="M11.4 0.6 L7.4 6.6 H16 Z" fill="#8a7ed6"/><path d="M7.4 6.6 L11.4 0.6" stroke="#f4f4ff" stroke-width="1.2"/>
<path d="M11.4 0.6 L21.8 9.6" stroke="#1a1a1a" stroke-width="1.3"/><path d="M12.2 2 L19.5 8.6" stroke="#f4f4f4" stroke-width="0.9"/>
<path d="M1 7 H17.3 L21.4 18.2 H3.2 Z" fill="#e2e06a"/>
<path d="M1 7.2 H16.5" stroke="#f4f2a0" stroke-width="0.9"/>
<path d="M17.3 7.4 L21.4 18.2 H3.2" fill="none" stroke="#1e1e10" stroke-width="1.5"/></svg>
<div class="r" style="left:1082.7px;top:497px;width:396px;height:23.5px;background:#ffffff;border-top:1.5px solid #2a2a2a;border-left:1.5px solid #2a2a2a;border-bottom:1px solid #ececec"></div>
<div class="t" style="left:1085.60px;top:503.12px;font-size:13.62px;line-height:13.62px;font-family:'Liberation Sans', sans-serif;color:#2a2a2a;transform:scaleX(1.0306);-webkit-text-stroke:0.1px #222;">/home/napcok</div>
<svg class="r" style="left:1488.7px;top:503.7px" width="14.5" height="10" viewBox="0 0 14.5 10"><path d="M12.5 0.5 V6 H5 V3 L0.6 6.8 L5 10 V8 H14 V0.5 Z" fill="#30c8d8" stroke="#1a5a70" stroke-width="0.7"/></svg>
<div class="r" style="left:893px;top:527px;width:144px;height:265.5px;background:#ffffff;"></div>
<div class="r" style="left:893px;top:527px;width:144px;height:28px;background:#dcdad5;"></div>
<div class="t" style="left:897.80px;top:535.16px;font-size:12.75px;line-height:12.75px;font-family:'Liberation Sans', sans-serif;color:#222;transform:scaleX(0.9796);-webkit-text-stroke:0.1px #222;">Places</div>
<svg class="r" style="left:1019.6px;top:537.5px" width="8.4" height="5.2" viewBox="0 0 8.4 5.2"><path d="M0 0 H8.4 L4.2 5.2 Z" fill="#111"/></svg>
<div class="r" style="left:893px;top:555px;width:144px;height:26px;background:#a3a19c;"></div>
<div class="t" style="left:921.90px;top:562.21px;font-size:13.04px;line-height:13.04px;font-family:'Liberation Sans', sans-serif;color:#f4f4f4;transform:scaleX(1.0346);-webkit-text-stroke:0.1px #f4f4f4;">Home Folder</div>
<div class="t" style="left:921.90px;top:588.51px;font-size:13.04px;line-height:13.04px;font-family:'Liberation Sans', sans-serif;color:#2a3033;transform:scaleX(0.9766);-webkit-text-stroke:0.1px #2a3033;">Trash Can</div>
<div class="t" style="left:921.90px;top:615.31px;font-size:13.04px;line-height:13.04px;font-family:'Liberation Sans', sans-serif;color:#2a3033;transform:scaleX(0.9740);-webkit-text-stroke:0.1px #2a3033;">Filesystem R...</div>
<div class="t" style="left:921.90px;top:642.01px;font-size:13.04px;line-height:13.04px;font-family:'Liberation Sans', sans-serif;color:#2a3033;transform:scaleX(1.0308);-webkit-text-stroke:0.1px #2a3033;">Applications</div>
<div class="t" style="left:921.90px;top:668.91px;font-size:13.04px;line-height:13.04px;font-family:'Liberation Sans', sans-serif;color:#2a3033;transform:scaleX(0.9916);-webkit-text-stroke:0.1px #2a3033;">Devices</div>
<div class="t" style="left:921.90px;top:696.21px;font-size:13.04px;line-height:13.04px;font-family:'Liberation Sans', sans-serif;color:#2a3033;transform:scaleX(1.0975);-webkit-text-stroke:0.1px #2a3033;">Network</div>
<div class="t" style="left:921.90px;top:723.81px;font-size:13.04px;line-height:13.04px;font-family:'Liberation Sans', sans-serif;color:#2a3033;transform:scaleX(0.9158);-webkit-text-stroke:0.1px #2a3033;">MANJARO_...</div>
<div class="t" style="left:921.90px;top:749.81px;font-size:13.04px;line-height:13.04px;font-family:'Liberation Sans', sans-serif;color:#2a3033;transform:scaleX(0.9902);-webkit-text-stroke:0.1px #2a3033;">537 MB Volu...</div>
<svg class="r" style="left:895px;top:559.2px" width="22.5" height="19.5" viewBox="0 0 22.5 19.5"><path d="M1.5 7.5 L3.5 4.2 H8.5" fill="none" stroke="#f0f0d0" stroke-width="1"/>
<path d="M11.4 0.6 L7.4 6.6 H16 Z" fill="#8a7ed6"/><path d="M7.4 6.6 L11.4 0.6" stroke="#f4f4ff" stroke-width="1.2"/>
<path d="M11.4 0.6 L21.8 9.6" stroke="#1a1a1a" stroke-width="1.3"/><path d="M12.2 2 L19.5 8.6" stroke="#f4f4f4" stroke-width="0.9"/>
<path d="M1 7 H17.3 L21.4 18.2 H3.2 Z" fill="#e2e06a"/>
<path d="M1 7.2 H16.5" stroke="#f4f2a0" stroke-width="0.9"/>
<path d="M17.3 7.4 L21.4 18.2 H3.2" fill="none" stroke="#1e1e10" stroke-width="1.5"/></svg>
<svg class="r" style="left:896px;top:583.7px" width="21.5" height="23" viewBox="0 0 21.5 23"><path d="M0.5 3.5 L17 1 L21 6 L18 22.5 L6 22.8 Z" fill="#a8aaa8" stroke="#666" stroke-width="0.7"/><path d="M0.5 3.5 L17 1 L19 3.5 L3 6 Z" fill="#d8d8d8"/><path d="M3 6 L6 22.8" stroke="#777" stroke-width="0.8"/><path d="M14 8 L18.5 7 L16.5 20.5 L13 21 Z" fill="#888"/><circle cx="8.5" cy="13.5" r="4.6" fill="#3aa040"/><path d="M6.2 11.5 L8.5 9.8 L10.8 11.5 M11 13.8 L10.2 16.6 L7.2 16.6 M6 15.4 L5.6 12.6" stroke="#c8f0c8" stroke-width="1.3" fill="none"/></svg>
<svg class="r" style="left:895px;top:612px" width="22.5" height="19.5" viewBox="0 0 22.5 19.5"><path d="M0.6 3 Q0.6 0.8 2.4 0.8 H9 L11 3 H20 V18.5 H0.6 Z" fill="#e1de6e" stroke="#555" stroke-width="0.6"/><path d="M21.8 4 V19 H1.5" stroke="#222" stroke-width="1.4" fill="none"/></svg>
<svg class="r" style="left:895.5px;top:636.8px" width="22" height="23" viewBox="0 0 22 23"><path d="M3 11 H17 V22.5 H3 Z" fill="#e0dc60" stroke="#222" stroke-width="0.9"/><path d="M17 11 L20.5 8.5 V20 L17 22.5" fill="#b8b440" stroke="#222" stroke-width="0.8"/><path d="M3 11 L0.5 7.5 L8 6.5 L11 11 Z" fill="#f2f2f2" stroke="#555" stroke-width="0.6"/><path d="M17 11 L21.5 6 L15 5 Z" fill="#f2f2f2" stroke="#555" stroke-width="0.6"/><ellipse cx="5" cy="4.3" rx="4.4" ry="2.6" fill="#20a8b8" transform="rotate(-20 5 4.3)"/><ellipse cx="11" cy="2.8" rx="3.6" ry="2.4" fill="#c02890" transform="rotate(-15 11 2.8)"/><path d="M15.5 1 V8 M15.5 1 L18 3" stroke="#222" stroke-width="1"/><rect x="6" y="8" width="6" height="3" fill="#6a70c8"/></svg>
<svg class="r" style="left:895px;top:664px" width="23" height="23.2" viewBox="0 0 23 23.2"><rect x="4" y="0.5" width="15" height="13" fill="#d8d8d8" stroke="#333" stroke-width="0.8"/><rect x="6.5" y="3" width="10" height="8" fill="#1a3a6a"/><path d="M9 5 H14 M9 7.5 H14" stroke="#e0e0e0" stroke-width="1.2"/><path d="M3 14 H21 L23 21 H0.5 Z" fill="#c8c8c8" stroke="#333" stroke-width="0.8"/><path d="M3 17 H20 M2.5 19 H21" stroke="#555" stroke-width="0.8" stroke-dasharray="1 0.8"/></svg>
<svg class="r" style="left:895px;top:691.6px" width="23" height="21.2" viewBox="0 0 23 21.2"><rect x="1" y="0.5" width="10" height="9" fill="#d8d8d8" stroke="#333" stroke-width="0.7"/><rect x="2.5" y="2" width="7" height="6" fill="#2030c0"/><rect x="9" y="7" width="13" height="10" fill="#d8d8d8" stroke="#333" stroke-width="0.7"/><rect x="11" y="9" width="9" height="6" fill="#208090"/><rect x="9" y="17" width="14" height="3.5" fill="#c8c8c8" stroke="#333" stroke-width="0.6"/><path d="M2 13 H8 M5 10 V19 M1 19 H9" stroke="#333" stroke-width="0.8"/></svg>
<svg class="r" style="left:895px;top:718.3px" width="23" height="22.1" viewBox="0 0 23 22.1"><rect x="0.5" y="14" width="22" height="7.5" rx="1" fill="#c8c8c8" stroke="#444" stroke-width="0.7"/><circle cx="13" cy="9.5" r="9.3" fill="#c8e8c8" stroke="#555" stroke-width="0.6"/><path d="M13 0.2 A9.3 9.3 0 0 1 22.3 9.5 H13 Z" fill="#60d060"/><path d="M3.7 9.5 A9.3 9.3 0 0 0 13 18.8 V9.5 Z" fill="#a0e040"/><circle cx="13" cy="9.5" r="2" fill="#fff" stroke="#444" stroke-width="0.6"/></svg>
<svg class="r" style="left:1017px;top:725.4px" width="12.7" height="9.5" viewBox="0 0 12.7 9.5"><path d="M0.5 6 L6.35 0.4 L12.2 6 Z" fill="#111"/><rect x="0.5" y="7.6" width="11.7" height="1.9" fill="#111"/></svg>
<svg class="r" style="left:895px;top:750.6px" width="23" height="11.8" viewBox="0 0 23 11.8"><path d="M2.5 0.5 H22.5 V9 L20.5 11.3 H0.5 V2.5 Z" fill="#d0d0d0" stroke="#333" stroke-width="0.7"/><path d="M0.5 2.5 H20.5 V11.3 M20.5 2.5 L22.5 0.5" stroke="#555" stroke-width="0.6" fill="none"/><path d="M4 6 H16" stroke="#888" stroke-width="0.7"/></svg>
<div class="r" style="left:893.5px;top:771.5px;width:142.5px;height:1.0px;background:#a8a8a8;"></div>
<div class="r" style="left:1037px;top:527px;width:4px;height:265.5px;background:#dcdad5;"></div>
<svg class="r" style="left:1038.8px;top:646px" width="3" height="30" viewBox="0 0 3 30"><rect x="0.5" y="0.0" width="1.5" height="1.6" fill="#333"/><rect x="0.5" y="3.4" width="1.5" height="1.6" fill="#333"/><rect x="0.5" y="6.8" width="1.5" height="1.6" fill="#333"/><rect x="0.5" y="10.2" width="1.5" height="1.6" fill="#333"/><rect x="0.5" y="13.6" width="1.5" height="1.6" fill="#333"/><rect x="0.5" y="17.0" width="1.5" height="1.6" fill="#333"/><rect x="0.5" y="20.4" width="1.5" height="1.6" fill="#333"/><rect x="0.5" y="23.8" width="1.5" height="1.6" fill="#333"/><rect x="0.5" y="27.2" width="1.5" height="1.6" fill="#333"/></svg>
<div class="r" style="left:1041px;top:527px;width:472.5px;height:265.5px;background:#ffffff;"></div>
<svg class="r" style="left:1067.4px;top:536.5px" width="46.3" height="39" viewBox="0 0 46.3 39"><path d="M0.8 6 V1.8 Q0.8 0.6 2 0.6 H20.372 L24.539 6 Z" fill="#e8e47c" stroke="#b8b070" stroke-width="0.8"/>
<rect x="0.6" y="6" width="44.699999999999996" height="32" rx="1" fill="#e1de6e" stroke="#3a3a20" stroke-width="0.6"/>
<path d="M45.3 7 V38.2 H1.6" stroke="#2a2a18" stroke-width="1.6" fill="none"/>
<path d="M1.2 37.5 V6.6 H44.699999999999996" stroke="#f6f4c0" stroke-width="0.8" fill="none"/></svg>
<svg class="r" style="left:1157.6px;top:536px" width="45.2" height="41.4" viewBox="0 -2 45.2 41.4"><defs><linearGradient id="dg1a" x1="0" y1="0" x2="1" y2="1"><stop offset="0" stop-color="#38c8c0"/><stop offset="1" stop-color="#1a6a9a"/></linearGradient>
<linearGradient id="dg2a" x1="0" y1="0" x2="1" y2="1"><stop offset="0" stop-color="#4a78e0"/><stop offset="1" stop-color="#0a1a8a"/></linearGradient></defs>
<rect x="0" y="0" width="45.2" height="39.4" fill="#c8c8d0"/>
<path d="M0 0 H12 L0 11.5 Z" fill="url(#dg1a)"/><path d="M0 28 L11.5 39.4 H0 Z" fill="url(#dg1a)"/>
<path d="M33.5 0 H45.2 V11.5 Z" fill="url(#dg2a)"/><path d="M45.2 28 V39.4 H33.5 Z" fill="url(#dg2a)"/>
<path d="M12 0.8 H33.5 L44.4 11.5 V28 L33.5 38.6 H11.5 L0.8 28 V11.5 Z" fill="#e4e4ea"/>
<path d="M0 39 H45.2 V0" stroke="#0a1040" stroke-width="1" fill="none"/>
<path d="M6.4 21.3 L17.8 9.2 L27.3 19.4 L15.9 30.9 Z" fill="#fbfbfb" stroke="#444" stroke-width="0.9"/>
<path d="M19.5 14.5 L36.5 -1" stroke="#6a6420" stroke-width="4"/><path d="M19.5 14.5 L36.5 -1" stroke="#e6e07a" stroke-width="2.6"/>
<circle cx="37.3" cy="-1.6" r="1.9" fill="#b02010"/><circle cx="19.5" cy="15.6" r="0.9" fill="#111"/></svg>
<svg class="r" style="left:1248.5px;top:537px" width="46.3" height="39" viewBox="0 0 46.3 39"><path d="M0.8 6 V1.8 Q0.8 0.6 2 0.6 H20.372 L24.539 6 Z" fill="#e8e47c" stroke="#b8b070" stroke-width="0.8"/>
<rect x="0.6" y="6" width="44.699999999999996" height="32" rx="1" fill="#e1de6e" stroke="#3a3a20" stroke-width="0.6"/>
<path d="M45.3 7 V38.2 H1.6" stroke="#2a2a18" stroke-width="1.6" fill="none"/>
<path d="M1.2 37.5 V6.6 H44.699999999999996" stroke="#f6f4c0" stroke-width="0.8" fill="none"/></svg>
<svg class="r" style="left:1254px;top:547px" width="30" height="26" viewBox="0 0 30 26"><rect x="3" y="0" width="15" height="19" fill="#f4f4f4" stroke="#777" stroke-width="0.7"/><path d="M10 6 H22 L26 10 V25 H10 Z" fill="#f8f8f8" stroke="#777" stroke-width="0.7"/><path d="M12 13 H24 M12 16 H24 M12 19 H24 M12 22 H24" stroke="#aaa" stroke-width="0.6"/></svg>
<svg class="r" style="left:1338.5px;top:537px" width="46.3" height="39" viewBox="0 0 46.3 39"><path d="M0.8 6 V1.8 Q0.8 0.6 2 0.6 H20.372 L24.539 6 Z" fill="#e8e47c" stroke="#b8b070" stroke-width="0.8"/>
<rect x="0.6" y="6" width="44.699999999999996" height="32" rx="1" fill="#e1de6e" stroke="#3a3a20" stroke-width="0.6"/>
<path d="M45.3 7 V38.2 H1.6" stroke="#2a2a18" stroke-width="1.6" fill="none"/>
<path d="M1.2 37.5 V6.6 H44.699999999999996" stroke="#f6f4c0" stroke-width="0.8" fill="none"/></svg>
<svg class="r" style="left:1348px;top:546.5px" width="26" height="25" viewBox="0 0 26 25"><path d="M13 2.5 C20 1.5 24 6 23.5 12.5 H8.6 C9 16.5 13 18 16.5 15.6 H23 C21 21 16 23.5 11 23 C4 22 1.2 16 2.6 10.5 C4 5.5 8 3 13 2.5 Z" fill="#1020d8" stroke="#0a0a70" stroke-width="0.6"/>
<path d="M9 9.5 C9.5 6.5 16.5 6 17 9.5 Z" fill="#e8e49a"/>
<path d="M4 22.5 C0 25 -0.5 20 4.5 14 C9 8 18 2 22.5 1 C25.5 0.5 25.5 3 23.5 5.5" fill="none" stroke="#1020d8" stroke-width="1.8"/></svg>
<svg class="r" style="left:1428.7px;top:537px" width="46.3" height="39" viewBox="0 0 46.3 39"><path d="M0.8 6 V1.8 Q0.8 0.6 2 0.6 H20.372 L24.539 6 Z" fill="#e8e47c" stroke="#b8b070" stroke-width="0.8"/>
<rect x="0.6" y="6" width="44.699999999999996" height="32" rx="1" fill="#e1de6e" stroke="#3a3a20" stroke-width="0.6"/>
<path d="M45.3 7 V38.2 H1.6" stroke="#2a2a18" stroke-width="1.6" fill="none"/>
<path d="M1.2 37.5 V6.6 H44.699999999999996" stroke="#f6f4c0" stroke-width="0.8" fill="none"/></svg>
<svg class="r" style="left:1431.5px;top:547.5px" width="36" height="17" viewBox="0 0 36 17"><rect x="0" y="2.5" width="35.5" height="11" fill="#2a9a2a"/>
<path d="M0 3.6 H35.5 M0 6 H35.5 M0 8.4 H35.5 M0 10.8 H35.5 M0 13 H35.5" stroke="#7ee07e" stroke-width="1.1"/>
<path d="M7 2.5 V14 M14.5 2.5 V13 M21 2.5 V14 M28.5 2.5 V13" stroke="#1a7a1a" stroke-width="1.2"/>
<rect x="14" y="0" width="8" height="2.5" fill="#2a9a2a"/>
<ellipse cx="5.5" cy="14.8" rx="2" ry="1.5" fill="#1a8a1a"/><ellipse cx="20" cy="14.8" rx="2" ry="1.5" fill="#1a8a1a"/><ellipse cx="27" cy="14.5" rx="2" ry="1.5" fill="#1a8a1a"/></svg>
<svg class="r" style="left:1067.4px;top:609.3px" width="46.3" height="39" viewBox="0 0 46.3 39"><path d="M0.8 6 V1.8 Q0.8 0.6 2 0.6 H20.372 L24.539 6 Z" fill="#e8e47c" stroke="#b8b070" stroke-width="0.8"/>
<rect x="0.6" y="6" width="44.699999999999996" height="32" rx="1" fill="#e1de6e" stroke="#3a3a20" stroke-width="0.6"/>
<path d="M45.3 7 V38.2 H1.6" stroke="#2a2a18" stroke-width="1.6" fill="none"/>
<path d="M1.2 37.5 V6.6 H44.699999999999996" stroke="#f6f4c0" stroke-width="0.8" fill="none"/></svg>
<svg class="r" style="left:1071px;top:620px" width="40" height="24" viewBox="0 0 40 24"><path d="M2 6 L26 1 L29 19 L5 24 Z" fill="#f4f4f0" stroke="#888" stroke-width="0.6"/><path d="M4 8 L25 4 L27 16 L6 20 Z" fill="#2a8ad0"/><path d="M5 15 L26 11 L27 16 L6 20 Z" fill="#c0a040"/><path d="M6 13 Q12 9 18 12 L26 10 L26 12 L6 16 Z" fill="#2a8a30"/><path d="M28 3 L34 5 L32 22 L27 21 Z" fill="#e8e8e8" stroke="#888" stroke-width="0.5"/><path d="M34 5 L39 7 L37 23 L32 22 Z" fill="#e0e0e0" stroke="#888" stroke-width="0.5"/><rect x="29" y="6" width="3" height="12" fill="#2a70c0"/><rect x="34" y="8" width="3" height="12" fill="#2a70c0"/></svg>
<svg class="r" style="left:1158.5px;top:607.4px" width="46.3" height="39" viewBox="0 0 46.3 39"><path d="M0.8 6 V1.8 Q0.8 0.6 2 0.6 H20.372 L24.539 6 Z" fill="#e8e47c" stroke="#b8b070" stroke-width="0.8"/>
<rect x="0.6" y="6" width="44.699999999999996" height="32" rx="1" fill="#e1de6e" stroke="#3a3a20" stroke-width="0.6"/>
<path d="M45.3 7 V38.2 H1.6" stroke="#2a2a18" stroke-width="1.6" fill="none"/>
<path d="M1.2 37.5 V6.6 H44.699999999999996" stroke="#f6f4c0" stroke-width="0.8" fill="none"/></svg>
<svg class="r" style="left:1158.5px;top:647px" width="46" height="5" viewBox="0 0 46 5"><path d="M0 1 H46 M0 3.5 H46" stroke="#777" stroke-width="0.8"/><rect x="18" y="0.5" width="9" height="4" rx="1" fill="#d8d060" stroke="#666" stroke-width="0.5"/></svg>
<svg class="r" style="left:1248.2px;top:608px" width="46.3" height="39" viewBox="0 0 46.3 39"><path d="M0.8 6 V1.8 Q0.8 0.6 2 0.6 H20.372 L24.539 6 Z" fill="#e8e47c" stroke="#b8b070" stroke-width="0.8"/>
<rect x="0.6" y="6" width="44.699999999999996" height="32" rx="1" fill="#e1de6e" stroke="#3a3a20" stroke-width="0.6"/>
<path d="M45.3 7 V38.2 H1.6" stroke="#2a2a18" stroke-width="1.6" fill="none"/>
<path d="M1.2 37.5 V6.6 H44.699999999999996" stroke="#f6f4c0" stroke-width="0.8" fill="none"/></svg>
<svg class="r" style="left:1255px;top:616px" width="30" height="27" viewBox="0 0 30 27"><rect x="0" y="0" width="28" height="24" fill="#fafafa" stroke="#888" stroke-width="0.8"/><path d="M1 25 H29 V2" stroke="#aaa" stroke-width="1.4" fill="none"/></svg>
<svg class="r" style="left:1338.2px;top:608px" width="46.3" height="39" viewBox="0 0 46.3 39"><path d="M0.8 6 V1.8 Q0.8 0.6 2 0.6 H20.372 L24.539 6 Z" fill="#e8e47c" stroke="#b8b070" stroke-width="0.8"/>
<rect x="0.6" y="6" width="44.699999999999996" height="32" rx="1" fill="#e1de6e" stroke="#3a3a20" stroke-width="0.6"/>
<path d="M45.3 7 V38.2 H1.6" stroke="#2a2a18" stroke-width="1.6" fill="none"/>
<path d="M1.2 37.5 V6.6 H44.699999999999996" stroke="#f6f4c0" stroke-width="0.8" fill="none"/></svg>
<svg class="r" style="left:1343px;top:622px" width="37" height="16" viewBox="0 0 37 16"><rect x="7" y="3" width="18" height="10" rx="1" fill="#c8c8cc" stroke="#333" stroke-width="0.8"/><path d="M25 5 L33 2 V14 L25 11 Z" fill="#d8d8dc" stroke="#333" stroke-width="0.8"/><rect x="0" y="4" width="7" height="3" fill="#999" stroke="#333" stroke-width="0.6"/><path d="M10 10 H22" stroke="#555" stroke-width="1"/></svg>
<svg class="r" style="left:1428.4px;top:608px" width="46.3" height="39" viewBox="0 0 46.3 39"><path d="M0.8 6 V1.8 Q0.8 0.6 2 0.6 H20.372 L24.539 6 Z" fill="#e8e47c" stroke="#b8b070" stroke-width="0.8"/>
<rect x="0.6" y="6" width="44.699999999999996" height="32" rx="1" fill="#e1de6e" stroke="#3a3a20" stroke-width="0.6"/>
<path d="M45.3 7 V38.2 H1.6" stroke="#2a2a18" stroke-width="1.6" fill="none"/>
<path d="M1.2 37.5 V6.6 H44.699999999999996" stroke="#f6f4c0" stroke-width="0.8" fill="none"/></svg>
<div class="t" style="left:1084.00px;top:585.34px;font-size:12.90px;line-height:12.90px;font-family:'Liberation Sans', sans-serif;color:#2b3033;transform:scaleX(1.0283);-webkit-text-stroke:0.15px #2b3033;">bin</div>
<div class="t" style="left:1158.50px;top:585.34px;font-size:12.90px;line-height:12.90px;font-family:'Liberation Sans', sans-serif;color:#2b3033;transform:scaleX(1.0376);-webkit-text-stroke:0.15px #2b3033;">Desktop</div>
<div class="t" style="left:1238.60px;top:585.34px;font-size:12.90px;line-height:12.90px;font-family:'Liberation Sans', sans-serif;color:#2b3033;transform:scaleX(1.0577);-webkit-text-stroke:0.15px #2b3033;">Documents</div>
<div class="t" style="left:1330.30px;top:585.34px;font-size:12.90px;line-height:12.90px;font-family:'Liberation Sans', sans-serif;color:#2b3033;transform:scaleX(1.0452);-webkit-text-stroke:0.15px #2b3033;">Downloads</div>
<div class="t" style="left:1437.50px;top:585.34px;font-size:12.90px;line-height:12.90px;font-family:'Liberation Sans', sans-serif;color:#2b3033;transform:scaleX(0.9975);-webkit-text-stroke:0.15px #2b3033;">Music</div>
<div class="t" style="left:1069.60px;top:656.84px;font-size:12.90px;line-height:12.90px;font-family:'Liberation Sans', sans-serif;color:#2b3033;transform:scaleX(1.0151);-webkit-text-stroke:0.15px #2b3033;">Pictures</div>
<div class="t" style="left:1166.00px;top:656.84px;font-size:12.90px;line-height:12.90px;font-family:'Liberation Sans', sans-serif;color:#2b3033;transform:scaleX(0.9678);-webkit-text-stroke:0.15px #2b3033;">Public</div>
<div class="t" style="left:1241.60px;top:656.84px;font-size:12.90px;line-height:12.90px;font-family:'Liberation Sans', sans-serif;color:#2b3033;transform:scaleX(1.0733);-webkit-text-stroke:0.15px #2b3033;">Templates</div>
<div class="t" style="left:1344.00px;top:656.84px;font-size:12.90px;line-height:12.90px;font-family:'Liberation Sans', sans-serif;color:#2b3033;transform:scaleX(1.0049);-webkit-text-stroke:0.15px #2b3033;">Videos</div>
<div class="t" style="left:1420.70px;top:656.84px;font-size:12.90px;line-height:12.90px;font-family:'Liberation Sans', sans-serif;color:#2b3033;transform:scaleX(1.0752);-webkit-text-stroke:0.15px #2b3033;">wallpapers</div>
<div class="r" style="left:893px;top:792.5px;width:621px;height:23.5px;background:#dcdad5;"></div>
<div class="r" style="left:893.5px;top:793px;width:384px;height:20px;border-top:1.5px solid #2a2a2a;border-left:1.5px solid #2a2a2a;border-bottom:1px solid #f4f4f4"></div>
<div class="r" style="left:1280.2px;top:793px;width:215.6px;height:20px;border-top:1.5px solid #2a2a2a;border-left:1.5px solid #2a2a2a;border-bottom:1px solid #f4f4f4"></div>
<div class="t" style="left:895.90px;top:797.01px;font-size:13.04px;line-height:13.04px;font-family:'Liberation Sans', sans-serif;color:#2a2a2a;transform:scaleX(1.0134);-webkit-text-stroke:0.1px #222;">10 items (22 hidden)</div>
<div class="t" style="left:1282.80px;top:796.71px;font-size:13.04px;line-height:13.04px;font-family:'Liberation Sans', sans-serif;color:#2a2a2a;transform:scaleX(0.9894);-webkit-text-stroke:0.1px #222;">Free space: 5.6 GiB (Total: 12.6 GiB)</div>
<svg class="r" style="left:1498px;top:797px" width="15" height="16" viewBox="0 0 15 16"><path d="M14 2 L2 15 M14 7 L7 15 M14 11 L11 15" stroke="#888" stroke-width="0.9"/><path d="M14.5 3 L3 15.5 M14.5 8 L8 15.5 M14.5 12 L12 15.5" stroke="#fff" stroke-width="0.6"/></svg>
<div class="r" style="left:893.9px;top:818.3px;width:22.700000000000045px;height:2.7000000000000455px;background:#9c9a94;"></div>
<div class="r" style="left:920px;top:818.3px;width:593.8px;height:2.7000000000000455px;background:#9c9a94;"></div>
<div class="r" style="left:0px;top:832.6px;width:1536px;height:31.399999999999977px;background:#d4d1cb;"></div>
<div class="r" style="left:0px;top:832.8px;width:1536px;height:1.400000000000091px;background:#b4eeee;"></div>
<div class="r" style="left:0px;top:834.2px;width:1536px;height:3.2999999999999545px;background:#d2d1c4;"></div>
<div class="r" style="left:0px;top:862.8px;width:1536px;height:1.2000000000000455px;background:#fbfbfb;"></div>
<svg class="r" style="left:4.7px;top:843px" width="8.5" height="11.5" viewBox="0 0 8.5 11.5"><path d="M8.3 0 V11.5 L0.2 5.75 Z" fill="#8e9a12"/></svg>
<svg class="r" style="left:20.3px;top:837.8px" width="22" height="22" viewBox="0 0 22 22"><rect x="0.6" y="0.6" width="20.8" height="20.8" fill="#3dba5c" stroke="#a8f0b8" stroke-width="1.2"/><rect x="6" y="6" width="1.6" height="14.5" fill="#b8f2c4"/><rect x="14" y="6" width="1.6" height="14.5" fill="#b8f2c4"/></svg>
<svg class="r" style="left:49.8px;top:840.4px" width="15.4" height="15.6" viewBox="0 0 15.4 15.6"><rect x="0" y="2.2" width="15.2" height="13.4" fill="#1c3aa8"/><path d="M0 2.2 H4 L0 6 Z M0 15.6 V12 L3.5 15.6 Z" fill="#30b0c0"/><path d="M1.6 3.8 H13.6 V14 H1.6 Z" fill="#e2e2ea"/><path d="M3 9.5 L6.5 6.5 L9.5 9.5 L6 12.5 Z" fill="#fff" stroke="#555" stroke-width="0.7"/><path d="M6.6 8.6 L13.4 1.6" stroke="#5a5410" stroke-width="2.2"/><path d="M6.6 8.6 L13.4 1.6" stroke="#e0d860" stroke-width="1.3"/><circle cx="13.8" cy="1.2" r="1.1" fill="#b02818"/></svg>
<svg class="r" style="left:70.3px;top:839.4px" width="20.5" height="19.5" viewBox="0 0 20.5 19.5"><path d="M1 4 Q1 1 3 1 H8 L10 3 H19 V15.5 H1 Z" fill="#e6e268" stroke="#777" stroke-width="0.6"/><path d="M19.5 3.5 V16 H1.5" stroke="#222" stroke-width="1.1" fill="none"/><path d="M10.5 11.5 L15.8 17.8" stroke="#2a50b0" stroke-width="2.6"/><circle cx="7" cy="8.2" r="4.8" fill="#90e4ec" stroke="#1a4a40" stroke-width="1.3"/></svg>
<svg class="r" style="left:94.3px;top:841px" width="18.7" height="14.5" viewBox="0 0 18.7 14.5"><rect x="0" y="0" width="18.7" height="14.5" fill="#050512"/><text x="2" y="10.5" font-family="Liberation Sans" font-weight="700" font-size="8.5" fill="#e8e8e8">C:\</text></svg>
<svg class="r" style="left:116.7px;top:838.3px" width="21" height="21" viewBox="0 0 21 21"><circle cx="9.8" cy="9.8" r="9.4" fill="#1a30c0"/><path d="M5 2.5 Q10 -0.5 16 3 Q18.5 6 17 9 Q14 8 12 6 Q8 5 6 8 Q4 7 5 2.5 Z" fill="#20a040"/><path d="M1.5 6 Q3 4 5 6 L4 10 Q2 9 1.5 6 Z" fill="#e8e8f0"/><circle cx="12" cy="11.5" r="3.6" fill="#80e0e0" stroke="#2a8a9a" stroke-width="0.8"/><path d="M15 15 L19.2 19.2" stroke="#c82020" stroke-width="2.6"/></svg>
<div class="r" style="left:142.2px;top:837.5px;width:19.0px;height:22.5px;background:#eeedea;"></div>
<div class="t" style="left:148.10px;top:841.81px;font-size:12.46px;line-height:12.46px;font-family:'Liberation Sans', sans-serif;font-weight:700;color:#9a9a9a;transform:scaleX(1.0387);-webkit-text-stroke:0;">1</div>
<div class="r" style="left:164.2px;top:836.4px;width:133.8px;height:24.2px;background:#d9d6d0;border:1px solid #a8a59f"></div>
<svg class="r" style="left:172.5px;top:841.5px" width="15" height="13" viewBox="0 0 15 13"><rect x="0" y="0" width="15" height="13" rx="1" fill="#2a3a28"/><rect x="1" y="1" width="13" height="11" fill="#3f5a3a"/><path d="M3 3.5 L6 6 L3 8.5" stroke="#b0c0a8" stroke-width="1" fill="none"/><rect x="6" y="8.6" width="4" height="1" fill="#b0c0a8"/></svg>
<div class="t" style="left:190.20px;top:841.95px;font-size:12.17px;line-height:12.17px;font-family:'Liberation Sans', sans-serif;color:#4a4a4a;transform:scaleX(0.9307);-webkit-text-stroke:0;">PyRadio: Your Inte...</div>
<div class="r" style="left:301.7px;top:836.4px;width:132.7px;height:24.2px;background:#d9d6d0;border:1px solid #a8a59f"></div>
<svg class="r" style="left:305.5px;top:839.5px" width="17" height="17" viewBox="0 0 17 17"><circle cx="8.5" cy="8.5" r="8.2" fill="#d42a22"/><circle cx="7" cy="5" r="0.9" fill="#f8d8d0"/><circle cx="9.5" cy="8" r="0.9" fill="#f8d8d0"/><circle cx="8" cy="11" r="0.9" fill="#f8d8d0"/></svg>
<div class="t" style="left:328.30px;top:844.66px;font-size:8.99px;line-height:8.99px;font-family:'Liberation Sans', sans-serif;color:#4a4a4a;transform:scaleX(1.1591);-webkit-text-stroke:0;">cava</div>
<div class="r" style="left:715.5px;top:837.5px;width:19.799999999999955px;height:22.5px;background:#eeedea;"></div>
<div class="t" style="left:721.80px;top:841.81px;font-size:12.46px;line-height:12.46px;font-family:'Liberation Sans', sans-serif;font-weight:700;color:#1e1e1e;transform:scaleX(1.0387);">2</div>
<div class="r" style="left:738.7px;top:836.4px;width:133.29999999999995px;height:24.2px;background:#d9d6d0;border:1px solid #a8a59f"></div>
<svg class="r" style="left:743.3px;top:839.5px" width="16.5" height="15" viewBox="0 0 16.5 15"><path d="M0.5 2.5 Q0.5 0.8 2 0.8 H6 L7 2 H15.5 V14 H0.5 Z" fill="#e6e264" stroke="#b0ac50" stroke-width="0.6"/><path d="M16 2.5 V14.5 H1" stroke="#6a6a40" stroke-width="0.9" fill="none"/></svg>
<div class="t" style="left:764.50px;top:841.95px;font-size:12.17px;line-height:12.17px;font-family:'Liberation Sans', sans-serif;color:#4a4a4a;transform:scaleX(0.9680);-webkit-text-stroke:0;">napcok</div>
<div class="r" style="left:874.3px;top:836.4px;width:134.4000000000001px;height:24.2px;background:#efeeeb;border:1px solid #3a3a3a"></div>
<svg class="r" style="left:881px;top:840.5px" width="14" height="14.5" viewBox="0 0 14 14.5"><rect x="0" y="0" width="14" height="14.5" fill="#a01010"/><rect x="1" y="1" width="12" height="12.5" fill="#c82020"/><path d="M3 4 L6 6.5 L3 9" stroke="#f0c0c0" stroke-width="0.8" fill="none"/></svg>
<div class="t" style="left:900.50px;top:841.95px;font-size:12.17px;line-height:12.17px;font-family:'Liberation Sans', sans-serif;color:#4a4a4a;transform:scaleX(0.9651);-webkit-text-stroke:0;">napcok@mabox:~</div>
<div class="r" style="left:1290.4px;top:837.5px;width:18.59999999999991px;height:22.5px;background:#eeedea;"></div>
<div class="t" style="left:1296.10px;top:841.81px;font-size:12.46px;line-height:12.46px;font-family:'Liberation Sans', sans-serif;font-weight:700;color:#9a9a9a;transform:scaleX(1.0387);-webkit-text-stroke:0;">3</div>
<div class="r" style="left:1315px;top:837.5px;width:18.59999999999991px;height:22.5px;background:#eeedea;"></div>
<div class="t" style="left:1320.70px;top:841.81px;font-size:12.46px;line-height:12.46px;font-family:'Liberation Sans', sans-serif;font-weight:700;color:#9a9a9a;transform:scaleX(1.0387);-webkit-text-stroke:0;">4</div>
<div class="r" style="left:1336px;top:837.5px;width:101px;height:22.5px;background:#e2e0dc;"></div>
<svg class="r" style="left:1343px;top:842px" width="45" height="17.5" viewBox="0 0 45 17.5"><path d="M0 5 L2 6 L3 4 L7 3 L9 6 L11 4 L12 1 L13 6 L16 5 L18 7 L21 8 V17.5 H0 Z" fill="#5eaa38"/><path d="M9 0 L10 6 L8 6 Z" fill="#5eaa38"/><rect x="22.8" y="11" width="22" height="6.5" fill="#f0b830"/></svg>
<svg class="r" style="left:1412.4px;top:838.6px" width="21.5" height="19.5" viewBox="0 0 21.5 19.5"><rect x="0.5" y="0.5" width="9" height="8" fill="#d8d8d8" stroke="#333" stroke-width="0.7"/><rect x="2" y="2" width="6" height="5" fill="#2030c0"/><rect x="8" y="6" width="12" height="9" fill="#d8d8d8" stroke="#333" stroke-width="0.7"/><rect x="10" y="8" width="8" height="5" fill="#208090"/><rect x="8" y="15" width="13" height="3.5" fill="#c8c8c8" stroke="#333" stroke-width="0.6"/><path d="M1.5 12 H7 M4 9 V17 M0.5 17 H8" stroke="#333" stroke-width="0.8"/></svg>
<div class="t" style="left:1464.00px;top:836.92px;font-size:9.86px;line-height:9.86px;font-family:'Liberation Sans', sans-serif;font-weight:700;color:#222;transform:scaleX(1.2140);">13:16</div>
<div class="t" style="left:1443.00px;top:848.82px;font-size:9.86px;line-height:9.86px;font-family:'Liberation Sans', sans-serif;color:#333;transform:scaleX(1.0126);">Monday 24 May</div>
<svg class="r" style="left:1523.5px;top:842.8px" width="8.5" height="11" viewBox="0 0 8.5 11"><path d="M0.2 0 V11 L8.3 5.5 Z" fill="#8e9a12"/></svg>
</body></html>
